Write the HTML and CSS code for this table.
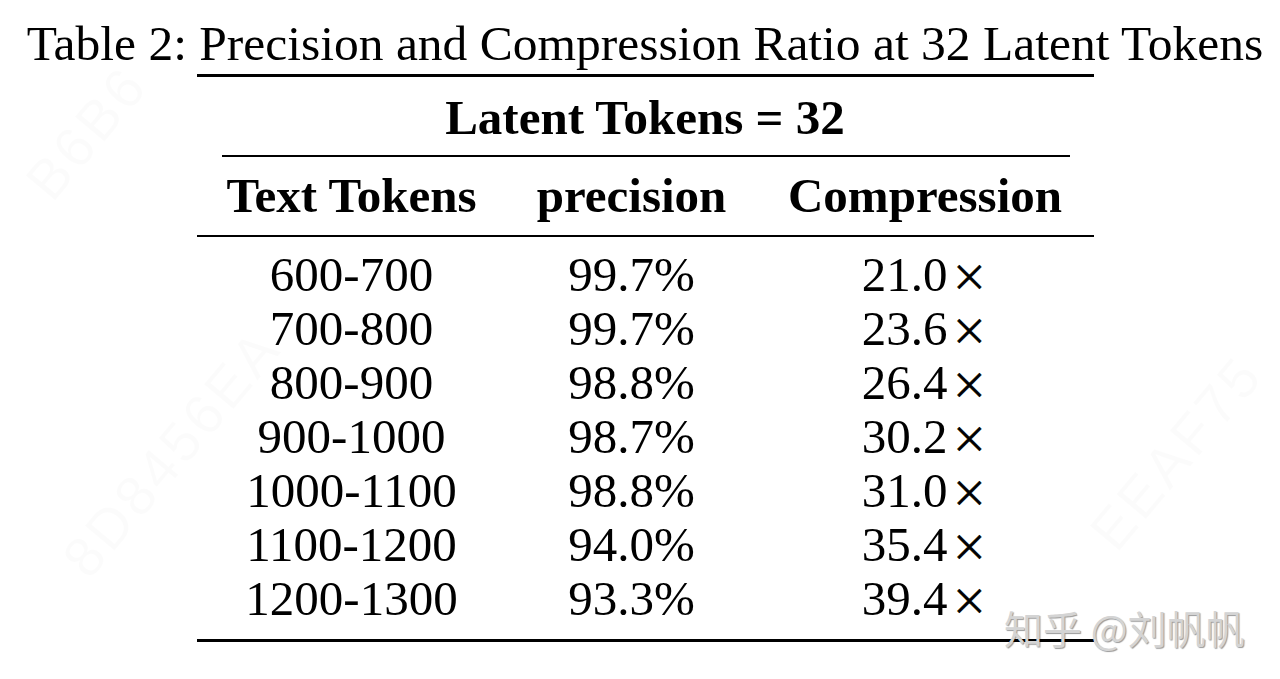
FILE: index.html
```html
<!DOCTYPE html>
<html lang="en">
<head>
<meta charset="utf-8">
<title>Table 2</title>
<link rel="stylesheet" href="styles.css">
</head>
<body>
<div class="page">
  <div class="caption">Table 2: Precision and Compression Ratio at 32 Latent Tokens</div>
  <div class="table">
    <div class="rule top"></div>
    <div class="group">Latent Tokens = 32</div>
    <div class="cmid"></div>
    <div class="row head">
      <div class="c1">Text Tokens</div>
      <div class="c2">precision</div>
      <div class="c3">Compression</div>
    </div>
    <div class="rule mid"></div>
    <div class="body">
      <div class="row"><div class="c1">600-700</div><div class="c2">99.7%</div><div class="c3">21.0<span class="x">×</span></div></div>
      <div class="row"><div class="c1">700-800</div><div class="c2">99.7%</div><div class="c3">23.6<span class="x">×</span></div></div>
      <div class="row"><div class="c1">800-900</div><div class="c2">98.8%</div><div class="c3">26.4<span class="x">×</span></div></div>
      <div class="row"><div class="c1">900-1000</div><div class="c2">98.7%</div><div class="c3">30.2<span class="x">×</span></div></div>
      <div class="row"><div class="c1">1000-1100</div><div class="c2">98.8%</div><div class="c3">31.0<span class="x">×</span></div></div>
      <div class="row"><div class="c1">1100-1200</div><div class="c2">94.0%</div><div class="c3">35.4<span class="x">×</span></div></div>
      <div class="row"><div class="c1">1200-1300</div><div class="c2">93.3%</div><div class="c3">39.4<span class="x">×</span></div></div>
    </div>
    <div class="rule bottom"></div>
  </div>
  <div class="faint f1">B6B6</div>
  <div class="faint f2">EEAF75</div>
  <div class="faint f3">8D8456EA</div>
  <div class="watermark">知乎 @刘帆帆</div>
</div>
</body>
</html>
```

FILE: styles.css
```css
html, body {
  margin: 0;
  padding: 0;
  background: #ffffff;
}

.page {
  position: relative;
  width: 1280px;
  height: 679px;
  overflow: hidden;
  font-family: "Liberation Serif", "Times New Roman", serif;
  color: #000;
  display: flex;
  flex-direction: column;
  align-items: center;
  padding-left: 10px;
  box-sizing: border-box;
}

.caption {
  margin-top: 13px;
  font-size: 49.5px;
  line-height: 61px;
  white-space: nowrap;
}

.table {
  width: 897px;
  display: flex;
  flex-direction: column;
}

.rule {
  background: #000;
}

.rule.top {
  height: 3px;
}

.rule.mid {
  height: 2px;
}

.rule.bottom {
  height: 3px;
}

.group {
  font-weight: bold;
  font-size: 49px;
  line-height: 75px;
  padding-top: 3px;
  text-align: center;
}

.cmid {
  height: 2px;
  background: #000;
  margin: 0 24px 0 25px;
}

.row {
  display: grid;
  grid-template-columns: 310px 250px 337px;
  text-align: center;
  font-size: 49px;
  line-height: 54px;
  white-space: nowrap;
}

.row.head {
  font-weight: bold;
  line-height: 78px;
}

.body {
  padding: 11px 0 13px;
}

.x {
  font-family: "DejaVu Sans", sans-serif;
  font-size: 45px;
  font-weight: 200;
  -webkit-text-stroke: 0.9px #000;
  margin-left: 3px;
  line-height: 0;
}

.faint {
  position: absolute;
  font-family: "Liberation Sans", Arial, sans-serif;
  font-size: 56px;
  color: rgba(0, 0, 0, 0.014);
  transform: rotate(-50deg);
  white-space: nowrap;
  letter-spacing: 4px;
}

.f1 {
  left: 10px;
  top: 100px;
}

.f2 {
  left: 1060px;
  top: 420px;
}

.f3 {
  left: 20px;
  top: 420px;
}

.watermark {
  position: absolute;
  left: 1004px;
  top: 603px;
  font-family: "Noto Sans CJK SC", "Noto Sans", sans-serif;
  font-size: 39px;
  line-height: 48px;
  color: #d4d4d4;
  text-shadow: 1px 1px 1px rgba(0, 0, 0, 0.4);
  white-space: nowrap;
}
```
